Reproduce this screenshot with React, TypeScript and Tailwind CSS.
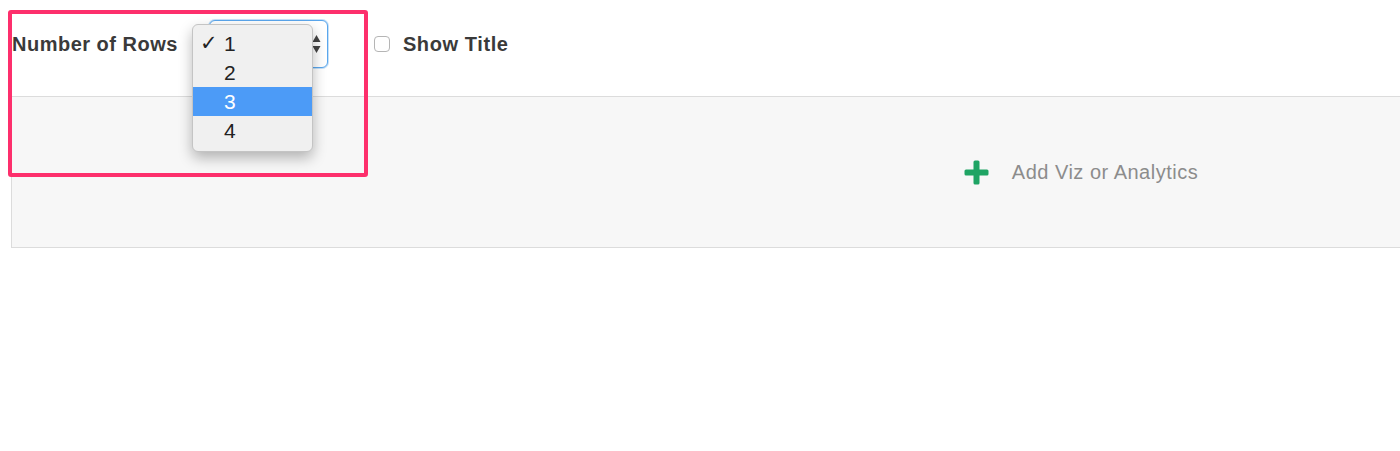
import React from "react";

const options = ["1", "2", "3", "4"];

function RowsMenu() {
  // open native-looking popup of the select
  return (
    <div className="absolute left-[192px] top-[24px] w-[121px] rounded-[6px] border border-[#c4c4c4] bg-[#f0f0f0] pt-[4px] pb-[6px] shadow-[0_6px_14px_rgba(0,0,0,0.28)]">
      {options.map((o) => (
        <div
          key={o}
          className={`flex h-[29px] items-center text-[21px] leading-none ${
            o === "3" ? "bg-[#4c9bf7] text-white" : "text-[#222]"
          }`}
        >
          <span className="w-[31px] pl-[7px] font-['DejaVu_Sans',sans-serif] text-[21px] font-bold">{o === "1" ? "✓" : ""}</span>
          <span>{o}</span>
        </div>
      ))}
    </div>
  );
}

export default function App() {
  return (
    <div className="relative h-[451px] w-[1400px] overflow-hidden bg-white font-['Liberation_Sans',Arial,sans-serif]">
      {/* Toolbar */}
      <div className="flex h-[87px] items-center pl-[12px]">
        <span className="text-[20px] font-bold tracking-[0.5px] text-[#3a3a3a]">Number of Rows</span>
        <div className="ml-[31px] flex h-[48px] w-[119px] items-center justify-end rounded-[6px] border border-[#5aa6ec] bg-white pr-[6px] shadow-[0_0_0_1px_rgba(90,166,236,0.35)]">
          <svg width="9" height="20" viewBox="0 0 9 20">
            <path d="M4.5 1 L8.5 8 L0.5 8 Z" fill="#444" />
            <path d="M4.5 19 L8.5 12 L0.5 12 Z" fill="#444" />
          </svg>
        </div>
        <label className="ml-[46px] flex items-center">
          <span className="h-[16px] w-[16px] rounded-[4px] border border-[#b5b5b5] bg-white" />
          <span className="ml-[13px] text-[20px] font-bold tracking-[0.6px] text-[#3a3a3a]">Show Title</span>
        </label>
      </div>

      {/* Empty viz panel */}
      <div className="ml-[11px] mt-[9px] flex h-[152px] w-[2140px] items-center justify-center border border-[#dcdcdc] bg-[#f7f7f7]">
        <svg width="25" height="25" viewBox="0 0 25 25" className="mr-[23px]">
          <rect x="9.5" y="0.5" width="6" height="24" rx="1.5" fill="#1fa464" />
          <rect x="0.5" y="9.5" width="24" height="6" rx="1.5" fill="#1fa464" />
        </svg>
        <span className="text-[20px] tracking-[0.5px] text-[#8c8c8c]">Add Viz or Analytics</span>
      </div>

      <RowsMenu />

      {/* highlight annotation */}
      <div className="pointer-events-none absolute left-[8px] top-[10px] h-[167px] w-[360px] rounded-[3px] border-[4px] border-[#fd2f6c]" />
    </div>
  );
}
